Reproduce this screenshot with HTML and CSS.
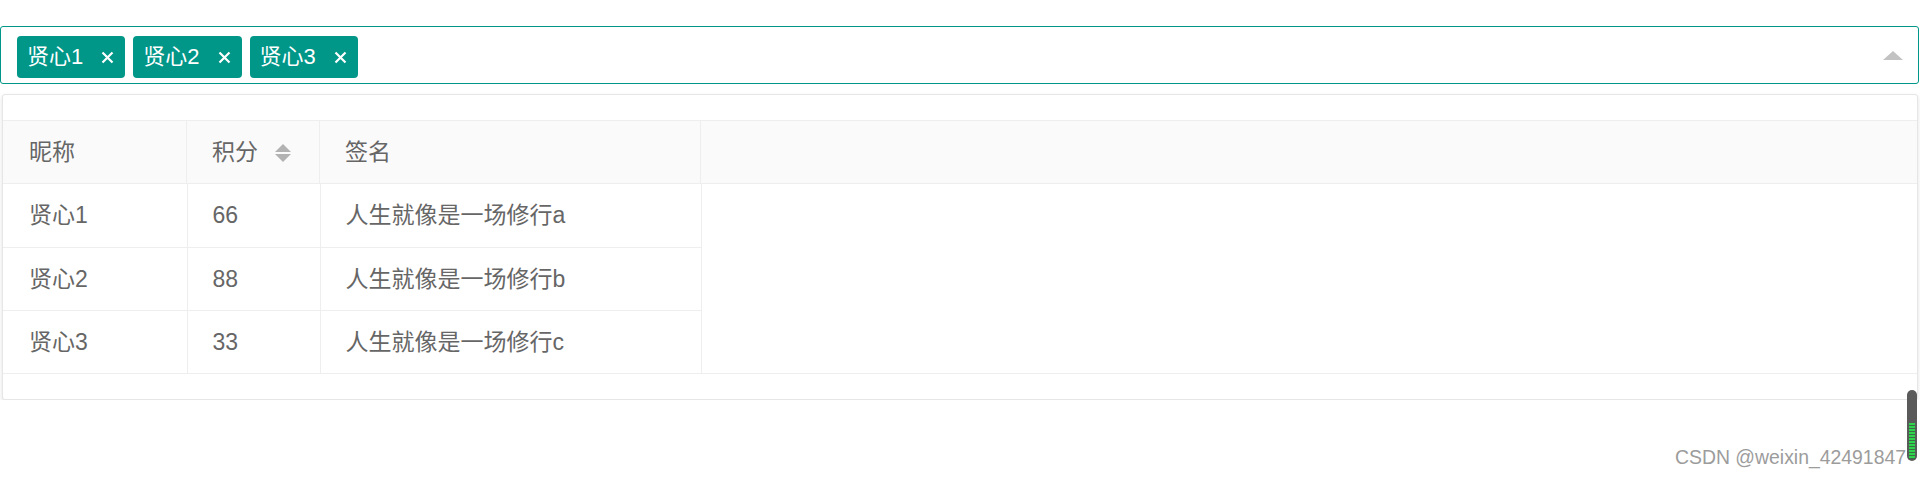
FILE: index.html
```html
<!DOCTYPE html>
<html>
<head>
    <title>xm-select 表格下拉</title>
    <link rel="stylesheet" href="styles.css">
</head>
<body>

<div class="demo">
    <!-- selected tags -->
    <div class="select-box">
        <div class="select-tags">
            <span class="tag">贤心1<i class="tag-close"><svg width="13" height="13" viewBox="0 0 13 13"><path d="M1.5 1.5 L11.5 11.5 M11.5 1.5 L1.5 11.5" stroke="#fff" stroke-width="2.2"/></svg></i></span>
            <span class="tag">贤心2<i class="tag-close"><svg width="13" height="13" viewBox="0 0 13 13"><path d="M1.5 1.5 L11.5 11.5 M11.5 1.5 L1.5 11.5" stroke="#fff" stroke-width="2.2"/></svg></i></span>
            <span class="tag">贤心3<i class="tag-close"><svg width="13" height="13" viewBox="0 0 13 13"><path d="M1.5 1.5 L11.5 11.5 M11.5 1.5 L1.5 11.5" stroke="#fff" stroke-width="2.2"/></svg></i></span>
        </div>
        <span class="select-arrow"></span>
    </div>

    <!-- dropdown panel with table -->
    <div class="select-panel">
        <div class="table-box">
            <div class="table-head">
                <div class="th col-name">昵称</div>
                <div class="th col-score">积分
                    <span class="sort"><em class="sort-asc"></em><em class="sort-desc"></em></span>
                </div>
                <div class="th col-sign">签名</div>
                <div class="th col-fill"></div>
            </div>
            <div class="table-body">
                <table class="rows">
                    <tr><td class="col-name">贤心1</td><td class="col-score">66</td><td class="col-sign">人生就像是一场修行a</td></tr>
                    <tr><td class="col-name">贤心2</td><td class="col-score">88</td><td class="col-sign">人生就像是一场修行b</td></tr>
                    <tr><td class="col-name">贤心3</td><td class="col-score">33</td><td class="col-sign">人生就像是一场修行c</td></tr>
                </table>
            </div>
        </div>
    </div>
</div>

<div class="watermark">CSDN @weixin_42491847</div>
<div class="meter"><span class="meter-fill"></span></div>

</body>
</html>
```

FILE: styles.css
```css
body {
    margin: 0;
    padding: 0;
    background-color: #fff;
    font-family: "Liberation Sans", "Noto Sans CJK SC", sans-serif;
    color: #666;
}

.demo {
    padding-top: 26px;
}

.select-box {
    display: flex;
    align-items: center;
    width: 1919px;
    box-sizing: border-box;
    border: 1px solid #009688;
    border-radius: 3px;
    padding: 9px 15px 5px 16px;
}

.select-tags {
    flex: 1;
    display: flex;
    gap: 8px;
}

.tag {
    display: flex;
    align-items: center;
    height: 42px;
    padding: 0 11px 0 10px;
    border-radius: 4px;
    background-color: #009688;
    color: #fff;
    font-size: 22px;
    line-height: 30px;
}

.tag-close {
    display: flex;
    margin-left: 18px;
}

.select-arrow {
    width: 0;
    height: 0;
    margin-top: -3px;
    border-left: 10px solid transparent;
    border-right: 10px solid transparent;
    border-bottom: 9px solid #c2c2c2;
}

.select-panel {
    margin: 10px 2px 0 2px;
    padding: 25px 0;
    border: 1px solid #e6e6e6;
    border-radius: 3px;
    background-color: #fff;
    box-shadow: 0 2px 4px rgba(0, 0, 0, 0.12);
}

.table-box {
    border-top: 1px solid #eee;
    border-bottom: 1px solid #eee;
    font-size: 23px;
    line-height: 30px;
}

.table-head {
    display: flex;
    height: 62px;
    background-color: #fafafa;
    border-bottom: 1px solid #eee;
}

.th {
    display: flex;
    align-items: center;
    box-sizing: border-box;
    padding: 0 25px;
    border-right: 1px solid #eee;
}

.col-name { width: 184px; padding-left: 26px; }
.col-score { width: 133px; }
.col-sign { width: 381px; }
.col-fill { flex: 1; border-right: none; }

.sort {
    display: flex;
    flex-direction: column;
    gap: 2px;
    margin-left: 17px;
    margin-top: 2px;
}

.sort em {
    width: 0;
    height: 0;
    border-left: 8px solid transparent;
    border-right: 8px solid transparent;
}

.sort-asc { border-bottom: 8px solid #b2b2b2; }
.sort-desc { border-top: 8px solid #b2b2b2; }

.rows {
    width: 698px;
    border-collapse: collapse;
    table-layout: fixed;
}

.rows td {
    height: 63px;
    box-sizing: border-box;
    padding: 0 25px;
    border-right: 1px solid #eee;
    border-bottom: 1px solid #eee;
    white-space: nowrap;
}

.rows td.col-name { padding-left: 26px; }

.rows tr:last-child td {
    border-bottom: none;
}

.watermark {
    position: absolute;
    top: 448px;
    right: 14px;
    font-family: "Liberation Sans", sans-serif;
    font-size: 19.4px;
    line-height: 1;
    color: #9c9c9c;
}

.meter {
    position: absolute;
    top: 390px;
    left: 1907px;
    width: 10px;
    height: 71px;
    box-sizing: border-box;
    padding: 33px 2px 2px;
    border-radius: 5px;
    background-color: #5a5a5a;
    display: flex;
}

.meter-fill {
    flex: 1;
    background: repeating-linear-gradient(#2fd34c 0 2px, #3a6e44 2px 3px);
}
```
